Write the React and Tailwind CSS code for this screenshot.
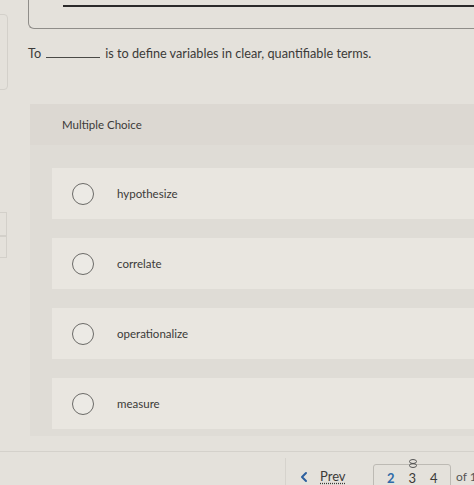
import { ChevronLeft } from 'lucide-react';

const options = ['hypothesize', 'correlate', 'operationalize', 'measure'];

const Radio = () => (
  <span className="w-[22px] h-[22px] rounded-full border-[1.5px] border-[#6b6a67] bg-[#eceae5] shrink-0" />
);

export default function App() {
  return (
    <div
      className="relative w-[474px] h-[485px] overflow-hidden bg-[#e4e1db] text-[#3b3a38]"
      style={{ fontFamily: 'Lato, "Open Sans", sans-serif' }}
    >
      {/* faint side tabs */}
      <div className="absolute left-[-4px] top-[14px] w-[12px] h-[76px] border border-[#d3d0ca] rounded-[4px]" />
      <div className="absolute left-[-4px] top-[212px] w-[11px] h-[24px] border border-[#d3d0ca]" />
      <div className="absolute left-[-4px] top-[236px] w-[11px] h-[22px] border border-[#d3d0ca]" />

      {/* top answer box */}
      <div className="ml-[28px] h-[29px] border-l border-b border-[#8f8d89] rounded-bl-[6px]">
        <div className="ml-[34px] pt-[5px]">
          <div className="h-[2px] bg-[#2b2a2a]" />
        </div>
      </div>

      {/* question */}
      <div className="ml-[28px] mt-[16px] flex items-end text-[12.7px] leading-[16px]">
        <span>To</span>
        <span className="w-[54px] h-[1px] bg-[#4a4946] ml-[5px] mr-[5px] mb-[3px]" />
        <span>is to define variables in clear, quantifiable terms.</span>
      </div>

      {/* multiple choice panel */}
      <div className="ml-[30px] mt-[43px] bg-[#dfdcd6]">
        <div className="h-[41px] bg-[#dcd8d2] pl-[32px] flex items-center text-[11.5px]">
          Multiple Choice
        </div>
        <div className="pl-[22px] pt-[23px] pb-[7px] flex flex-col gap-[19px]">
          {options.map((o) => (
            <div key={o} className="h-[51px] bg-[#e9e6e0] flex items-center pl-[20px]">
              <Radio />
              <span className="ml-[23px] text-[11.5px]">{o}</span>
            </div>
          ))}
        </div>
      </div>

      {/* footer */}
      <div className="mt-[15px] border-t border-[#d4d1cb] h-[40px] relative">
        <div className="absolute left-[285px] top-[6px] bottom-0 w-[1px] bg-[#d6d3cd]" />
        <div className="absolute left-[296px] top-[15px] flex items-center gap-[8px]">
          <ChevronLeft size={16} strokeWidth={3} className="text-[#2c5f9e]" />
          <span className="text-[13px] underline decoration-dotted underline-offset-2">Prev</span>
        </div>
        <div className="absolute left-[373px] top-[12px] w-[78px] h-[40px] border border-[#bdbab4] rounded-[3px] flex items-start pt-[4px] pl-[13px] gap-[14px] text-[13px]">
          <span className="font-bold text-[#2f6aa8]">2</span>
          <span className="relative">
            3
            <svg className="absolute left-[-1px] top-[-10px]" width="10" height="9" viewBox="0 0 10 9">
              <ellipse cx="5" cy="2.5" rx="3.5" ry="2" fill="none" stroke="#555" strokeWidth="1" />
              <ellipse cx="5" cy="6.5" rx="3.5" ry="2" fill="none" stroke="#555" strokeWidth="1" />
            </svg>
          </span>
          <span>4</span>
        </div>
        <span className="absolute left-[456px] top-[16px] text-[12px] text-[#555] whitespace-nowrap">of 1</span>
      </div>
    </div>
  );
}
